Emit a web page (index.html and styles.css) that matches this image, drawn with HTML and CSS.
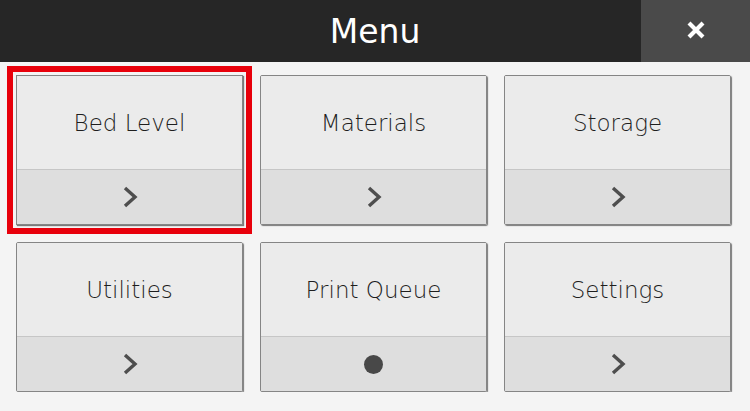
FILE: index.html
```html
<!DOCTYPE html>
<html lang="en">
  <head>
    <meta charset="UTF-8" />
    <meta name="viewport" content="width=device-width, initial-scale=1.0" />
    <title>Menu</title>
    <link rel="stylesheet" href="styles.css">
  </head>
  <body>
    <div class="header">
      <div class="title">Menu</div>
      <div class="close">
        <svg class="close-icon" viewBox="0 0 20 18"><path d="M3 2 L17 16 M17 2 L3 16" /></svg>
      </div>
    </div>

    <div class="grid">
      <div class="tile selected">
        <div class="tile-label">Bed Level</div>
        <div class="tile-foot">
          <svg class="chevron" viewBox="0 0 16 22"><polyline points="3,2 13,11 3,20" /></svg>
        </div>
      </div>
      <div class="tile">
        <div class="tile-label">Materials</div>
        <div class="tile-foot">
          <svg class="chevron" viewBox="0 0 16 22"><polyline points="3,2 13,11 3,20" /></svg>
        </div>
      </div>
      <div class="tile">
        <div class="tile-label">Storage</div>
        <div class="tile-foot">
          <svg class="chevron" viewBox="0 0 16 22"><polyline points="3,2 13,11 3,20" /></svg>
        </div>
      </div>
      <div class="tile">
        <div class="tile-label">Utilities</div>
        <div class="tile-foot">
          <svg class="chevron" viewBox="0 0 16 22"><polyline points="3,2 13,11 3,20" /></svg>
        </div>
      </div>
      <div class="tile">
        <div class="tile-label">Print Queue</div>
        <div class="tile-foot">
          <span class="dot"></span>
        </div>
      </div>
      <div class="tile">
        <div class="tile-label">Settings</div>
        <div class="tile-foot">
          <svg class="chevron" viewBox="0 0 16 22"><polyline points="3,2 13,11 3,20" /></svg>
        </div>
      </div>
    </div>
  </body>
</html>
```

FILE: styles.css
```css
body {
  margin: 0;
  background-color: #f4f4f4;
  font-family: "DejaVu Sans", sans-serif;
}

.header {
  display: flex;
  height: 62px;
  background-color: #262626;
}

.title {
  flex: 1;
  display: flex;
  align-items: center;
  justify-content: center;
  padding-left: 109px;
  color: #ffffff;
  font-size: 33px;
}

.close {
  width: 109px;
  display: flex;
  align-items: center;
  justify-content: center;
  background-color: #4a4a4a;
}

.close-icon {
  width: 20px;
  height: 18px;
  margin-top: -3px;
}

.close-icon path {
  fill: none;
  stroke: #ffffff;
  stroke-width: 4.2;
}

.grid {
  display: grid;
  grid-template-columns: repeat(3, 227px);
  grid-auto-rows: 150px;
  gap: 17px;
  padding: 13px 0 0 16px;
}

.tile {
  display: flex;
  flex-direction: column;
  box-sizing: border-box;
  border: 1px solid #858585;
  border-radius: 2px;
  box-shadow: 1px 1px 1px rgba(0, 0, 0, 0.5);
  overflow: hidden;
}

.tile.selected {
  border-radius: 0;
  outline: 6px solid #e8000b;
  outline-offset: 3px;
}

.tile-label {
  height: 93px;
  display: flex;
  align-items: center;
  justify-content: center;
  background-color: #ebebeb;
  border-bottom: 1px solid #c6c6c6;
  color: #1e1e1e;
  font-size: 23px;
  font-weight: 200;
}

.tile-foot {
  flex: 1;
  display: flex;
  align-items: center;
  justify-content: center;
  background-color: #dedede;
}

.chevron {
  width: 16px;
  height: 22px;
}

.chevron polyline {
  fill: none;
  stroke: #4e4e4e;
  stroke-width: 3.4;
}

.dot {
  width: 19px;
  height: 19px;
  border-radius: 50%;
  background-color: #484848;
}
```
